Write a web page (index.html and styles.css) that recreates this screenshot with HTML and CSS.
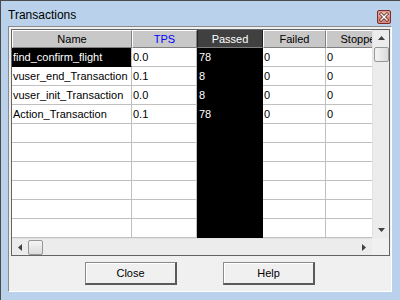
FILE: index.html
```html
<!DOCTYPE html>
<html>
<head>
<meta charset="utf-8">
<link rel="stylesheet" href="styles.css">
</head>
<body>
<div class="window">
  <div class="titlebar">
    <span class="title">Transactions</span>
    <span class="closebox">
      <svg width="14" height="14" viewBox="0 0 14 14">
        <rect x="0.5" y="0.5" width="13" height="13" rx="1.5" fill="#d88878" stroke="#7a2c2c"/>
        <rect x="1.5" y="1.5" width="11" height="5" fill="#eab0a4"/>
        <path d="M4 4 L10 10 M10 4 L4 10" stroke="#5a1a1a" stroke-width="3" stroke-linecap="square"/>
        <path d="M4 4 L10 10 M10 4 L4 10" stroke="#ffffff" stroke-width="1.5" stroke-linecap="square"/>
      </svg>
    </span>
  </div>
  <div class="client">
    <div class="gridbox">
      <div class="gridtop">
        <div class="table">
          <div class="hcell">Name</div>
          <div class="hcell tps">TPS</div>
          <div class="hcell passed">Passed</div>
          <div class="hcell">Failed</div>
          <div class="hcell">Stopped</div>

          <div class="cell sel">find_confirm_flight</div>
          <div class="cell">0.0</div>
          <div class="cell dark">78</div>
          <div class="cell">0</div>
          <div class="cell">0</div>

          <div class="cell">vuser_end_Transaction</div>
          <div class="cell">0.1</div>
          <div class="cell dark">8</div>
          <div class="cell">0</div>
          <div class="cell">0</div>

          <div class="cell">vuser_init_Transaction</div>
          <div class="cell">0.0</div>
          <div class="cell dark">8</div>
          <div class="cell">0</div>
          <div class="cell">0</div>

          <div class="cell">Action_Transaction</div>
          <div class="cell">0.1</div>
          <div class="cell dark">78</div>
          <div class="cell">0</div>
          <div class="cell">0</div>

          <div class="cell"></div><div class="cell"></div><div class="cell dark"></div><div class="cell"></div><div class="cell"></div>
          <div class="cell"></div><div class="cell"></div><div class="cell dark"></div><div class="cell"></div><div class="cell"></div>
          <div class="cell"></div><div class="cell"></div><div class="cell dark"></div><div class="cell"></div><div class="cell"></div>
          <div class="cell"></div><div class="cell"></div><div class="cell dark"></div><div class="cell"></div><div class="cell"></div>
          <div class="cell"></div><div class="cell"></div><div class="cell dark"></div><div class="cell"></div><div class="cell"></div>
          <div class="cell"></div><div class="cell"></div><div class="cell dark"></div><div class="cell"></div><div class="cell"></div>
        </div>
        <div class="vscroll">
          <div class="sbtn">
            <svg width="7" height="4" viewBox="0 0 7 4"><path d="M3.5 0 L7 4 L0 4 Z" fill="#404040"/></svg>
          </div>
          <div class="vthumb"></div>
          <div class="vtrack"></div>
          <div class="sbtn">
            <svg width="7" height="4" viewBox="0 0 7 4"><path d="M0 0 L7 0 L3.5 4 Z" fill="#404040"/></svg>
          </div>
        </div>
      </div>
      <div class="gridbottom">
        <div class="hscroll">
          <div class="sbtn">
            <svg width="4" height="7" viewBox="0 0 4 7"><path d="M4 0 L4 7 L0 3.5 Z" fill="#404040"/></svg>
          </div>
          <div class="hthumb"></div>
          <div class="htrack"></div>
          <div class="sbtn">
            <svg width="4" height="7" viewBox="0 0 4 7"><path d="M0 0 L4 3.5 L0 7 Z" fill="#404040"/></svg>
          </div>
        </div>
        <div class="corner"></div>
      </div>
    </div>
    <div class="buttons">
      <button class="btn">Close</button>
      <button class="btn">Help</button>
    </div>
  </div>
</div>
</body>
</html>
```

FILE: styles.css
```css
html, body {
  margin: 0;
  padding: 0;
  width: 400px;
  height: 300px;
  overflow: hidden;
}

.window {
  box-sizing: border-box;
  width: 400px;
  height: 300px;
  background: #b9d1ea;
  border-top: 1px solid #4a4a4a;
  border-left: 1px solid #4a4a4a;
  font-family: "Liberation Sans", Arial, sans-serif;
}

.titlebar {
  height: 25px;
  display: flex;
  align-items: flex-start;
}

.title {
  padding: 7px 0 0 7px;
  font-size: 12px;
  line-height: 14px;
  color: #000;
}

.closebox {
  margin: 9px 9px 0 auto;
  width: 14px;
  height: 14px;
  display: block;
}

.closebox svg {
  display: block;
}

.client {
  box-sizing: border-box;
  margin-left: 7px;
  width: 384px;
  height: 266px;
  background: #f0f0f0;
  border-top: 1px solid #8a8a8a;
  border-left: 1px solid #8a8a8a;
  border-right: 1px solid #ffffff;
  border-bottom: 1px solid #ffffff;
  display: flex;
  flex-direction: column;
}

.gridbox {
  box-sizing: border-box;
  margin: 2px 0 0 2px;
  width: 379px;
  height: 227px;
  border: 1px solid #646464;
  display: flex;
  flex-direction: column;
  background: #ffffff;
}

.gridtop {
  display: flex;
  height: 208px;
}

.table {
  width: 360px;
  height: 208px;
  overflow: hidden;
  display: grid;
  grid-template-columns: 120px 65px 66px 63px 70px;
  grid-template-rows: 18px repeat(10, 19px);
  font-size: 11px;
  background: #ffffff;
}

.hcell {
  box-sizing: border-box;
  background: #c8c8c8;
  border-top: 1px solid #ffffff;
  border-left: 1px solid #ffffff;
  border-right: 1px solid #808080;
  border-bottom: 1px solid #808080;
  text-align: center;
  line-height: 16px;
  color: #000;
  white-space: nowrap;
  overflow: hidden;
}

.hcell.tps {
  color: #0000ff;
}

.hcell.passed {
  background: #404040;
  color: #ffffff;
  border-top-color: #404040;
  border-left-color: #202020;
  border-right-color: #202020;
}

.cell {
  box-sizing: border-box;
  border-right: 1px solid #c0c0c0;
  border-bottom: 1px solid #c0c0c0;
  padding-left: 1px;
  line-height: 18px;
  color: #000;
  white-space: nowrap;
  overflow: hidden;
}

.cell.sel {
  background: #000;
  color: #fff;
  border-bottom-color: #000;
}

.cell.dark {
  background: #000;
  color: #fff;
  border-color: #000;
  padding-left: 2px;
}

.vscroll {
  width: 17px;
  height: 208px;
  display: flex;
  flex-direction: column;
  background: #ececec;
  border-left: 1px solid #e2e2e2;
  box-sizing: border-box;
}

.sbtn {
  width: 16px;
  height: 16px;
  display: flex;
  align-items: center;
  justify-content: center;
  flex: none;
}

.vthumb {
  box-sizing: border-box;
  margin: 1px 0 0 1px;
  width: 15px;
  height: 15px;
  border: 1px solid #979797;
  border-radius: 2px;
  background: linear-gradient(to right, #f4f4f4, #dcdcdc);
}

.vtrack {
  flex: 1;
}

.gridbottom {
  display: flex;
  height: 17px;
}

.hscroll {
  box-sizing: border-box;
  width: 360px;
  height: 17px;
  display: flex;
  align-items: center;
  background: #ececec;
  border-top: 1px solid #e2e2e2;
}

.hthumb {
  box-sizing: border-box;
  width: 15px;
  height: 15px;
  border: 1px solid #979797;
  border-radius: 2px;
  background: linear-gradient(to bottom, #f4f4f4, #dcdcdc);
}

.htrack {
  flex: 1;
}

.corner {
  width: 17px;
  height: 17px;
  background: #f0f0f0;
}

.buttons {
  display: flex;
  justify-content: center;
  gap: 46px;
  margin-top: 6px;
}

.btn {
  box-sizing: border-box;
  width: 92px;
  height: 23px;
  margin: 0;
  padding: 0;
  font-family: "Liberation Sans", Arial, sans-serif;
  font-size: 11px;
  color: #000;
  background: #f0f0f0;
  border-top: 1px solid #8a8a8a;
  border-left: 1px solid #8a8a8a;
  border-right: 2px solid #5a5a5a;
  border-bottom: 2px solid #5a5a5a;
  box-shadow: inset 1px 1px 0 #ffffff;
}
```
